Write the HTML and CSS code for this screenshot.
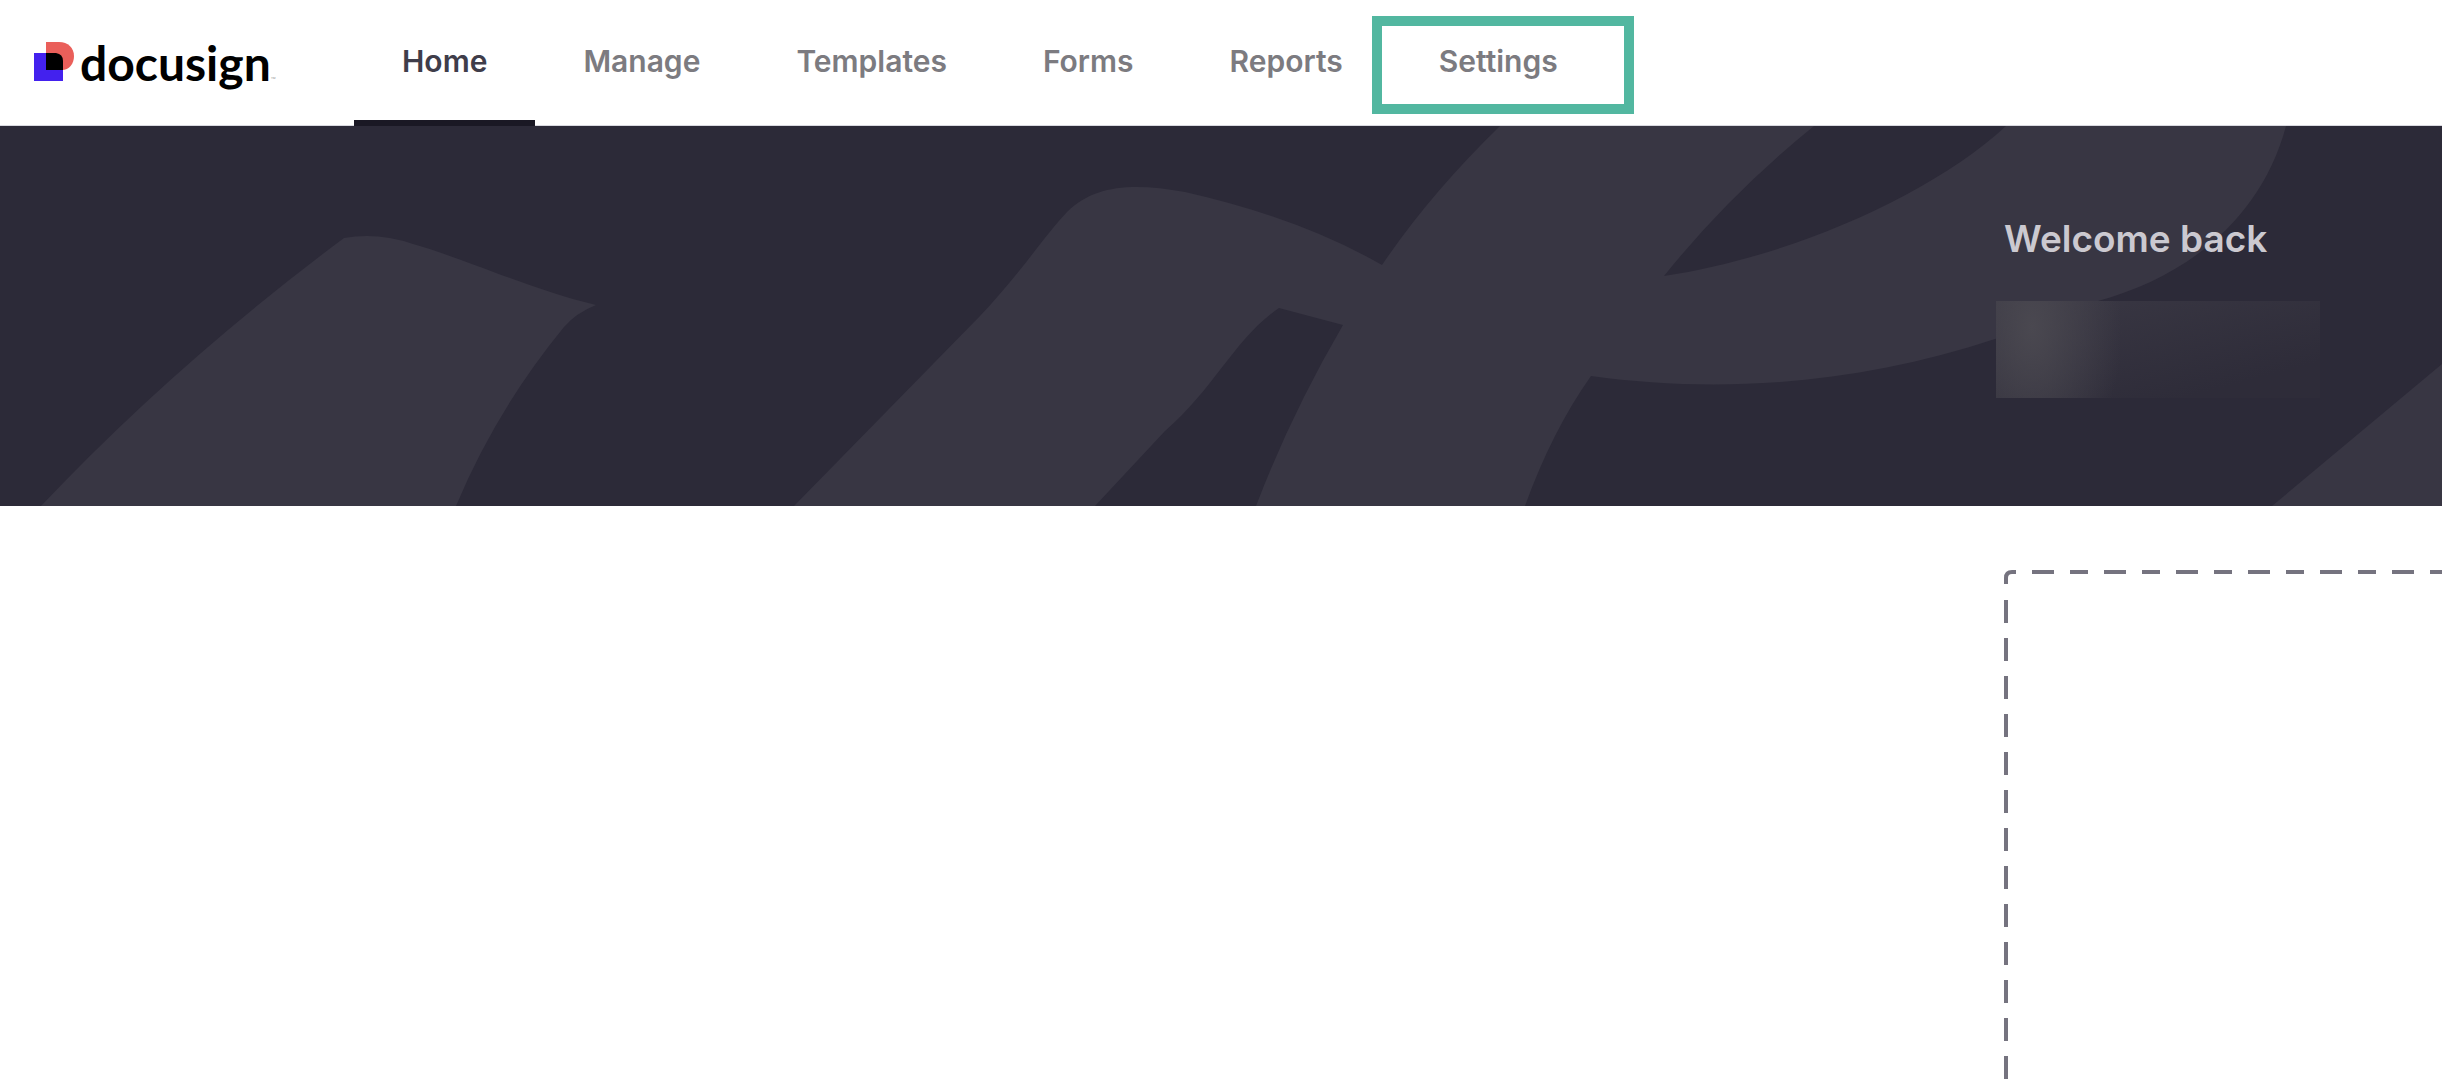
FILE: index.html
```html
<!DOCTYPE html>
<html lang="en">
<head>
    <meta charset="UTF-8">
    <meta name="viewport" content="width=device-width, initial-scale=1.0">
    <title>Docusign</title>
    <link rel="stylesheet" href="styles.css">
</head>
<body>
    <header class="header">
        <a class="brand" href="#">
            <svg class="brand-icon" viewBox="0 0 40 39" aria-hidden="true">
                <path fill="#ea5f5a" d="M12 0h13c9 0 15 6 15 14s-5 14-12 14H12z"/>
                <path fill="#4321ee" d="M0 11h12v17h17v11H0z"/>
                <path fill="#000" d="M12 11h10q7 1 7 8v9H12z"/>
            </svg>
            <span class="brand-name">docusign</span>
            <span class="brand-mark">™</span>
        </a>
        <nav class="nav">
            <a class="nav-link active" href="#">Home</a>
            <a class="nav-link" href="#">Manage</a>
            <a class="nav-link" href="#">Templates</a>
            <a class="nav-link" href="#">Forms</a>
            <a class="nav-link" href="#">Reports</a>
            <a class="nav-link highlighted" href="#">Settings</a>
        </nav>
    </header>

    <section class="banner">
        <svg class="banner-art" viewBox="0 0 2442 380" preserveAspectRatio="xMaxYMin slice" aria-hidden="true">
            <path d="M41 380Q175 238 344 112Q378 106 413 118C460 131 535 165 596 179Q576 187 564 201Q496 284 456 380Z"/>
            <!-- large stroke with two cut-outs -->
            <path d="M794 380L980 190C1020 148 1045 109 1067 86C1095 58 1135 57 1185 66Q1300 92 1382 139Q1430 68 1500 0H1814Q1730 68 1664 150C1790 131 1930 70 2006 0H2286C2262 90 2190 150 2098 175Q2050 200 1995 213C1860 258 1720 268 1591 250Q1552 305 1525 380H1256Q1291 288 1343 199L1279 182C1235 212 1215 262 1165 305L1095 380Z"/>
            <path d="M2272 380L2442 238V380Z"/>
        </svg>
        <div class="welcome">
            <h1 class="welcome-title">Welcome back</h1>
            <div class="user-name"></div>
        </div>
    </section>

    <main class="content">
        <div class="drop-zone">
            <svg class="drop-border" aria-hidden="true">
                <path d="M2 14V8Q2 2 8 2H12"/>
                <line x1="28" y1="2" x2="100%" y2="2" stroke-dasharray="22 16 18 16"/>
                <line x1="2" y1="30" x2="2" y2="100%" stroke-dasharray="23 15"/>
            </svg>
        </div>
    </main>
</body>
</html>
```
FILE: styles.css
```css
* {
    margin: 0;
    padding: 0;
    box-sizing: border-box;
}

body {
    display: flex;
    flex-direction: column;
    min-height: 100vh;
    font-family: Inter, sans-serif;
    background-color: #fff;
}

a {
    text-decoration: none;
}

.header {
    display: flex;
    height: 126px;
    padding-left: 34px;
    border-bottom: 1px solid #d9d9e0;
}

.brand {
    display: flex;
    flex: 0 0 320px;
    align-items: center;
    color: #000;
}

.brand-icon {
    width: 40px;
    height: 39px;
    margin: 0 6px 2px 0;
}

.brand-name {
    font-family: Lato, sans-serif;
    font-size: 48px;
    font-weight: 700;
    line-height: 56px;
}

.brand-mark {
    align-self: flex-end;
    padding-bottom: 40px;
    font-size: 8px;
    color: #aaa;
}

.nav {
    display: flex;
}

.nav-link {
    position: relative;
    padding: 0 48px;
    font-size: 30px;
    font-weight: 600;
    line-height: 122px;
    color: #7c7b80;
}

.nav-link.active {
    color: #3f3d4a;
}

.nav-link.active::after {
    content: "";
    position: absolute;
    left: 0;
    right: 0;
    bottom: -1px;
    height: 6px;
    background-color: #1a1824;
}

.nav-link.highlighted::after {
    content: "";
    position: absolute;
    top: 16px;
    right: -28px;
    bottom: 11px;
    left: -19px;
    border: 10px solid #52b7a0;
}

.banner {
    position: relative;
    display: grid;
    grid-template-columns: minmax(0, 1fr) 446px;
    height: 380px;
    background-color: #2c2a38;
}

.banner-art {
    position: absolute;
    inset: 0;
    width: 100%;
    height: 100%;
    fill: #383643;
}

.welcome {
    position: relative;
    grid-column: 2;
    padding-top: 89px;
}

.welcome-title {
    padding-left: 8px;
    font-size: 37px;
    font-weight: 600;
    line-height: 48px;
    color: #cbc9d0;
}

.user-name {
    width: 324px;
    height: 97px;
    margin-top: 38px;
    background: radial-gradient(ellipse 90px 160px at 36px 26px, #4a4850, rgba(74, 72, 80, 0)),
        linear-gradient(165deg, #3a3844, #2e2c39 80%);
}

.content {
    display: grid;
    flex: 1;
    grid-template-columns: minmax(0, 1fr) 438px;
    padding-top: 64px;
}

.drop-zone {
    position: relative;
    grid-column: 2;
}

.drop-border {
    position: absolute;
    inset: 0;
    width: 100%;
    height: 100%;
    fill: none;
    stroke: #75737f;
    stroke-width: 4px;
}
```
